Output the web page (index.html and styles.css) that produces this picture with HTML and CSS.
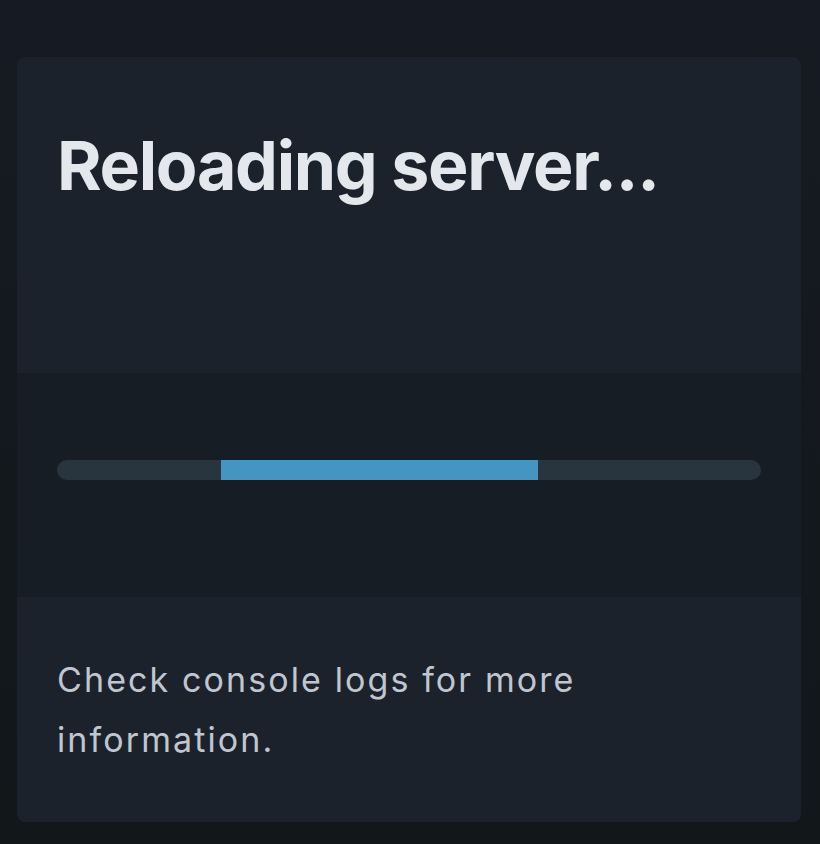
FILE: index.html
```html
<!DOCTYPE html>
<html>
<head>
<meta charset="utf-8">
<link rel="stylesheet" href="styles.css">
</head>
<body>
<div class="card">
  <div class="head">
    <h1 class="title">Reloading server...</h1>
  </div>
  <div class="mid">
    <div class="track"><div class="bar"></div></div>
  </div>
  <div class="foot">
    <p class="msg">Check console logs for more information.</p>
  </div>
</div>
</body>
</html>
```
FILE: styles.css
```css
html, body {
  margin: 0;
  padding: 0;
}
body {
  width: 820px;
  height: 844px;
  background: linear-gradient(#161a22, #12171a);
  font-family: Inter, "Noto Sans", sans-serif;
  padding: 57px 19px 0 17px;
  box-sizing: border-box;
}
.card {
  width: 784px;
  height: 765px;
  border-radius: 8px;
  overflow: hidden;
  background: #1c222c;
  display: flex;
  flex-direction: column;
}
.head {
  height: 316px;
  padding: 0 40px;
  box-sizing: border-box;
}
.title {
  margin: 0;
  padding-top: 68px;
  font-size: 68px;
  line-height: 80px;
  font-weight: 700;
  color: #e4e7ec;
  letter-spacing: -1.3px;
}
.mid {
  height: 224px;
  background: #171d25;
  padding: 87px 40px 0;
  box-sizing: border-box;
}
.track {
  height: 20px;
  border-radius: 10px;
  background: #28353e;
  padding-left: 164px;
}
.bar {
  width: 317px;
  height: 20px;
  background: #4495c1;
}
.foot {
  flex: 1;
  padding: 53px 40px 0;
  box-sizing: border-box;
}
.msg {
  margin: 0;
  width: 600px;
  font-size: 34px;
  line-height: 60px;
  letter-spacing: 2.1px;
  color: #c0c6d0;
}
```
